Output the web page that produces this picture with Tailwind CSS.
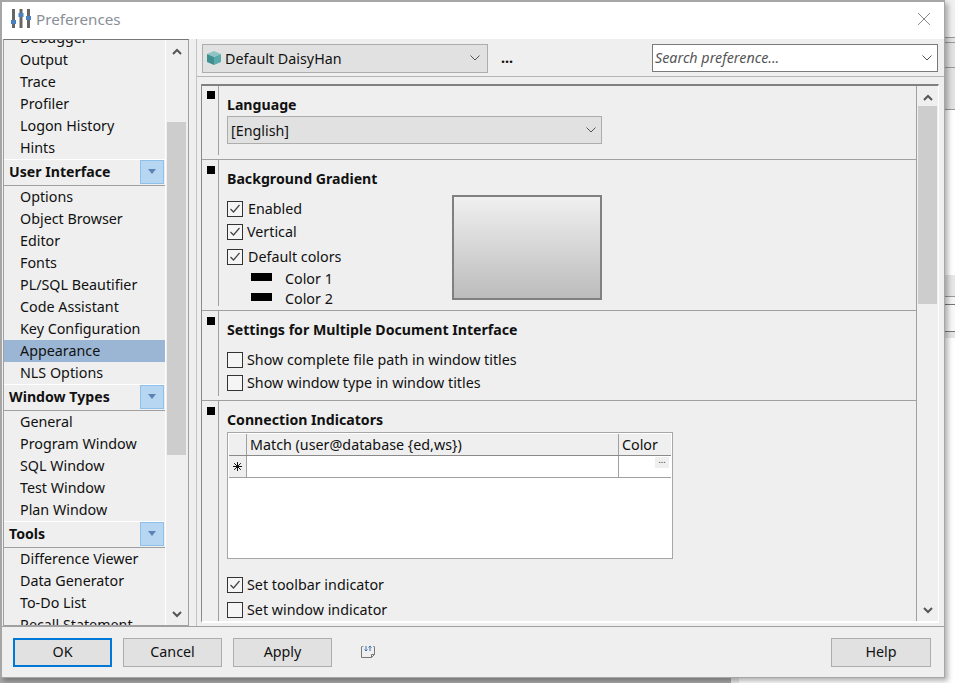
<!DOCTYPE html>
<html>
<head>
<meta charset="utf-8">
<script src="https://cdn.jsdelivr.net/npm/@tailwindcss/browser@4"></script>
</head>
<body class="w-[955px] h-[683px] overflow-hidden bg-white font-['Noto_Sans','Open_Sans',sans-serif] text-[14.3px] leading-[22px] text-[#111]">
<div class="relative w-[955px] h-[683px]">
  <!-- background app behind the dialog -->
  <div class="absolute left-[944px] top-[0px] w-[11px] h-[38px] bg-[#f0f0f0]"></div>
  <div class="absolute left-[944px] top-[38px] w-[11px] h-[72px] bg-[#e2e2e2]"></div>
  <div class="absolute left-[944px] top-[37px] w-[11px] h-[1px] bg-[#999]"></div>
  <div class="absolute left-[944px] top-[42px] w-[11px] h-[1px] bg-[#999]"></div>
  <div class="absolute left-[944px] top-[67px] w-[11px] h-[1px] bg-[#999]"></div>
  <div class="absolute left-[944px] top-[109px] w-[11px] h-[1px] bg-[#999]"></div>
  <div class="absolute left-[944px] top-[275px] w-[11px] h-[63px] bg-[#e6e6e6]"></div>
  <div class="absolute left-[944px] top-[296px] w-[11px] h-[1px] bg-[#999]"></div>
  <div class="absolute left-[944px] top-[297px] w-[11px] h-[7px] bg-[#f4f4f4]"></div>
  <div class="absolute left-[944px] top-[304px] w-[11px] h-[1px] bg-[#777]"></div>
  <div class="absolute left-[944px] top-[305px] w-[11px] h-[26px] bg-[#f8f8f8]"></div>
  <div class="absolute left-[944px] top-[331px] w-[11px] h-[1px] bg-[#777]"></div>
  <div class="absolute left-[0px] top-[678px] w-[731px] h-[5px] bg-[#a8a8a8]"></div>
  <div class="absolute left-[731px] top-[678px] w-[8px] h-[5px] bg-[#e8e8e8]"></div>

  <div class="relative flex flex-col w-[945px] h-[678px] border border-t-2 border-l-2 border-[#a6a6a6] bg-[#efefef] shadow-[3px_3px_5px_rgba(0,0,0,0.3)]">
    <!-- title bar -->
    <div class="flex items-center h-[37px] shrink-0 bg-white pl-[8px] pr-[13px] pb-[3px]">
      <svg width="22" height="22" viewBox="0 0 22 22" class="shrink-0">
        <g fill="#666"><rect x="2" y="1" width="3" height="19"/><rect x="9.500" y="1" width="3" height="19"/><rect x="17" y="1" width="3" height="19"/></g>
        <g fill="#4a7fc0"><rect x="1" y="12" width="5" height="4"/><rect x="8.500" y="5" width="5" height="4"/><rect x="16" y="8" width="5" height="4"/></g>
      </svg>
      <span class="ml-[4px] text-[15.200px] text-[#8a8f96]">Preferences</span>
      <svg width="14" height="14" viewBox="0 0 14 14" class="ml-auto" fill="none" stroke="#888" stroke-width="1"><path d="M1 1l12 12M13 1L1 13"/></svg>
    </div>

    <div class="flex flex-1 min-h-0">
      <!-- left tree -->
      <div class="relative w-[186px] shrink-0 ml-[1px] mr-[7px] border-x border-b border-t border-x-[#a0a0a0] border-b-[#a0a0a0] border-t-[#777] overflow-hidden">
        <div class="w-[162px] -mt-[13px] border-r border-white">
          <div class="h-[22px] pl-[16px]">Debugger</div>
          <div class="h-[22px] pl-[16px]">Output</div>
          <div class="h-[22px] pl-[16px]">Trace</div>
          <div class="h-[22px] pl-[16px]">Profiler</div>
          <div class="h-[22px] pl-[16px]">Logon History</div>
          <div class="h-[22px] pl-[16px]">Hints</div>
          <div class="flex items-center h-[27px] pl-[5px] pb-[2px] border-y border-t-white border-b-[#a0a0a0] font-bold text-[14.150px]">User Interface<span class="ml-auto mr-[1px] flex items-center justify-center w-[24px] h-[24px] bg-[#b6d6f2] border border-[#8fc0ea]"><span class="w-0 h-0 border-x-[4px] border-x-transparent border-t-[5px] border-t-[#5a84b5]"></span></span></div>
          <div class="h-[22px] pl-[16px]">Options</div>
          <div class="h-[22px] pl-[16px]">Object Browser</div>
          <div class="h-[22px] pl-[16px]">Editor</div>
          <div class="h-[22px] pl-[16px]">Fonts</div>
          <div class="h-[22px] pl-[16px]">PL/SQL Beautifier</div>
          <div class="h-[22px] pl-[16px]">Code Assistant</div>
          <div class="h-[22px] pl-[16px]">Key Configuration</div>
          <div class="h-[22px] pl-[16px] bg-[#9bb6d4]">Appearance</div>
          <div class="h-[22px] pl-[16px]">NLS Options</div>
          <div class="flex items-center h-[27px] pl-[5px] pb-[2px] border-y border-t-white border-b-[#a0a0a0] font-bold text-[14.150px]">Window Types<span class="ml-auto mr-[1px] flex items-center justify-center w-[24px] h-[24px] bg-[#b6d6f2] border border-[#8fc0ea]"><span class="w-0 h-0 border-x-[4px] border-x-transparent border-t-[5px] border-t-[#5a84b5]"></span></span></div>
          <div class="h-[22px] pl-[16px]">General</div>
          <div class="h-[22px] pl-[16px]">Program Window</div>
          <div class="h-[22px] pl-[16px]">SQL Window</div>
          <div class="h-[22px] pl-[16px]">Test Window</div>
          <div class="h-[22px] pl-[16px]">Plan Window</div>
          <div class="flex items-center h-[27px] pl-[5px] pb-[2px] border-y border-t-white border-b-[#a0a0a0] font-bold text-[14.150px]">Tools<span class="ml-auto mr-[1px] flex items-center justify-center w-[24px] h-[24px] bg-[#b6d6f2] border border-[#8fc0ea]"><span class="w-0 h-0 border-x-[4px] border-x-transparent border-t-[5px] border-t-[#5a84b5]"></span></span></div>
          <div class="h-[22px] pl-[16px]">Difference Viewer</div>
          <div class="h-[22px] pl-[16px]">Data Generator</div>
          <div class="h-[22px] pl-[16px]">To-Do List</div>
          <div class="h-[22px] pl-[16px]">Recall Statement</div>
        </div>
        <!-- scrollbar -->
        <div class="absolute right-[1px] top-0 bottom-0 w-[21px] flex flex-col items-center">
          <svg width="10" height="7" viewBox="0 0 10 7" class="mt-[8px]" fill="none" stroke="#555" stroke-width="2"><path d="M1 6l4-4 4 4"/></svg>
          <div class="w-[19px] h-[333px] mt-[67px] bg-[#cdcdcd]"></div>
          <svg width="10" height="7" viewBox="0 0 10 7" class="mt-auto mb-[7px]" fill="none" stroke="#555" stroke-width="2"><path d="M1 1l4 4 4-4"/></svg>
        </div>
      </div>

      <!-- right -->
      <div class="flex-1 min-w-0 flex flex-col border-l border-[#c4c4c4]">
        <div class="flex items-center h-[38px] shrink-0 pt-[1px] pl-[5px] pr-[6px] border-b border-[#b5b5b5]">
          <div class="flex items-center w-[286px] h-[29px] bg-[#e1e1e1] border border-[#adadad] pl-[3px] pr-[7px]">
            <svg width="16" height="16" viewBox="0 0 16 16" class="shrink-0"><path d="M1 4l7-3 7 3-7 3z" fill="#8fc4c4"/><path d="M1 4l7 3v8l-7-3z" fill="#3e8f92"/><path d="M15 4l-7 3v8l7-3z" fill="#5aa9ab"/></svg>
            <span class="ml-[3px] pt-[2px]">Default DaisyHan</span>
            <svg width="10" height="6" viewBox="0 0 10 6" class="ml-auto" fill="none" stroke="#555"><path d="M0.500 0.500L5 5l4.500-4.500"/></svg>
          </div>
          <span class="ml-[13px] font-bold leading-[14px]">...</span>
          <div class="ml-auto flex items-center w-[286px] h-[28px] bg-white border border-[#7a7a7a] pl-[2px] pr-[5px]">
            <span class="italic text-[#555]">Search preference...</span>
            <svg width="10" height="6" viewBox="0 0 10 6" class="ml-auto" fill="none" stroke="#555"><path d="M0.500 0.500L5 5l4.500-4.500"/></svg>
          </div>
        </div>

        <div class="relative flex-1 min-h-0 mt-[7px] mb-[3px] mr-[5px] ml-[4px] border-x border-t-2 border-t-[#808080] border-l-[#8a8a8a] border-r-white border-b-2 border-b-white overflow-hidden">
          <div class="w-[715px] h-full border-r border-[#a0a0a0]">
            <!-- language -->
            <section class="flex h-[74px] border-b border-[#a0a0a0]">
              <div class="w-[17px] shrink-0 h-[69px] mt-0 border-r border-[#a0a0a0] pl-[5px] pt-[5px]"><div class="w-[8px] h-[8px] bg-black"></div></div>
              <div class="pl-[8px] pt-[8px]">
                <div class="font-bold text-[14.150px]">Language</div>
                <div class="flex items-center w-[375px] h-[28px] mt-[0px] bg-[#e1e1e1] border border-[#adadad] px-[3px] pr-[5px]"><span class="pt-[1px]">[English]</span><svg width="10" height="6" viewBox="0 0 10 6" class="ml-auto" fill="none" stroke="#555"><path d="M0.500 0.500L5 5l4.500-4.500"/></svg></div>
              </div>
            </section>
            <!-- gradient -->
            <section class="flex h-[151px] border-b border-[#a0a0a0]">
              <div class="w-[17px] shrink-0 h-[146px] border-r border-[#a0a0a0] pl-[5px] pt-[6px]"><div class="w-[8px] h-[8px] bg-black"></div></div>
              <div class="pl-[8px] pt-[8px] flex-1 relative">
                <div class="font-bold text-[14.150px]">Background Gradient</div>
                <div class="flex items-center gap-[5px] mt-[8px] h-[22px]"><span class="flex items-center justify-center w-[16px] h-[16px] border border-[#333] bg-[#f5f5f5]"><svg width="12" height="10" viewBox="0 0 12 10" fill="none" stroke="#444" stroke-width="1.200"><path d="M1.500 5l3 3 6-7"/></svg></span>Enabled</div>
                <div class="flex items-center gap-[4px] mt-[1px] h-[22px]"><span class="flex items-center justify-center w-[16px] h-[16px] border border-[#333] bg-[#f5f5f5]"><svg width="12" height="10" viewBox="0 0 12 10" fill="none" stroke="#444" stroke-width="1.200"><path d="M1.500 5l3 3 6-7"/></svg></span>Vertical</div>
                <div class="flex items-center gap-[5px] mt-[3px] h-[22px]"><span class="flex items-center justify-center w-[16px] h-[16px] border border-[#333] bg-[#f5f5f5]"><svg width="12" height="10" viewBox="0 0 12 10" fill="none" stroke="#444" stroke-width="1.200"><path d="M1.500 5l3 3 6-7"/></svg></span>Default colors</div>
                <div class="flex items-center h-[20px] mt-[1px] pl-[24px]"><span class="w-[21px] h-[8px] bg-black mr-[13px] -mt-[5px]"></span>Color 1</div>
                <div class="flex items-center h-[20px] pl-[24px]"><span class="w-[21px] h-[8px] bg-black mr-[13px] -mt-[5px]"></span>Color 2</div>
                <div class="absolute left-[233px] top-[35px] w-[150px] h-[105px] border-2 border-[#808080] bg-gradient-to-b from-[#f0f0f0] to-[#bcbcbc]"></div>
              </div>
            </section>
            <!-- mdi -->
            <section class="flex h-[90px] border-b border-[#a0a0a0]">
              <div class="w-[17px] shrink-0 h-[85px] border-r border-[#a0a0a0] pl-[5px] pt-[6px]"><div class="w-[8px] h-[8px] bg-black"></div></div>
              <div class="pl-[8px] pt-[8px]">
                <div class="font-bold text-[14.150px]">Settings for Multiple Document Interface</div>
                <div class="flex items-center gap-[4px] mt-[8px] h-[22px]"><span class="w-[16px] h-[16px] border border-[#333] bg-[#f5f5f5]"></span>Show complete file path in window titles</div>
                <div class="flex items-center gap-[4px] mt-[1px] h-[22px]"><span class="w-[16px] h-[16px] border border-[#333] bg-[#f5f5f5]"></span>Show window type in window titles</div>
              </div>
            </section>
            <!-- connection -->
            <section class="flex h-[225px]">
              <div class="w-[17px] shrink-0 h-full border-r border-[#a0a0a0] pl-[5px] pt-[6px]"><div class="w-[8px] h-[8px] bg-black"></div></div>
              <div class="pl-[8px] pt-[8px]">
                <div class="font-bold text-[14.150px]">Connection Indicators</div>
                <div class="w-[446px] h-[127px] mt-[1px] border border-[#a6a6a6] bg-white p-[1px]">
                  <div class="flex h-[22px] bg-[#efefef] border-b border-[#8a8a8a]">
                    <div class="w-[18px] border-r border-[#a0a0a0]"></div>
                    <div class="w-[372px] pl-[3px] border-r border-[#a0a0a0]">Match (user@database {ed,ws})</div>
                    <div class="flex-1 pl-[3px]">Color</div>
                  </div>
                  <div class="flex h-[22px] border-b border-[#a0a0a0]">
                    <div class="flex items-center justify-center w-[18px] bg-[#efefef] border-r border-[#a0a0a0]"><svg width="9" height="9" viewBox="0 0 9 9" fill="none" stroke="#111"><path d="M4.500 0v9M0 4.500h9M1.200 1.200l6.600 6.600M7.800 1.200L1.200 7.800"/></svg></div>
                    <div class="w-[372px] border-r border-[#a0a0a0]"></div>
                    <div class="flex-1 flex justify-end items-start pr-[2px] pt-[1px]"><span class="flex items-start justify-center w-[14px] h-[11px] bg-[#efefef] text-[9px] leading-[6px] text-[#333]">...</span></div>
                  </div>
                </div>
                <div class="flex items-center gap-[4px] mt-[15px] h-[22px]"><span class="flex items-center justify-center w-[16px] h-[16px] border border-[#333] bg-[#f5f5f5]"><svg width="12" height="10" viewBox="0 0 12 10" fill="none" stroke="#444" stroke-width="1.200"><path d="M1.500 5l3 3 6-7"/></svg></span>Set toolbar indicator</div>
                <div class="flex items-center gap-[4px] mt-[3px] h-[22px]"><span class="w-[16px] h-[16px] border border-[#333] bg-[#f5f5f5]"></span>Set window indicator</div>
              </div>
            </section>
          </div>
          <!-- right scrollbar -->
          <div class="absolute right-0 top-0 bottom-0 w-[21px] flex flex-col items-center">
            <svg width="10" height="7" viewBox="0 0 10 7" class="mt-[8px]" fill="none" stroke="#555" stroke-width="2"><path d="M1 6l4-4 4 4"/></svg>
            <div class="w-[19px] h-[198px] mt-[5px] bg-[#cdcdcd]"></div>
            <svg width="10" height="7" viewBox="0 0 10 7" class="mt-auto mb-[7px]" fill="none" stroke="#555" stroke-width="2"><path d="M1 1l4 4 4-4"/></svg>
          </div>
        </div>
      </div>
    </div>

    <!-- footer -->
    <div class="flex items-center h-[51px] shrink-0 border-t border-[#a0a0a0] pl-[11px] pr-[13px]">
      <button class="w-[99px] h-[29px] bg-[#e1e1e1] border-2 border-[#0078d7]">OK</button>
      <button class="ml-[11px] w-[99px] h-[29px] bg-[#e1e1e1] border border-[#adadad]">Cancel</button>
      <button class="ml-[11px] w-[99px] h-[29px] bg-[#e1e1e1] border border-[#adadad]">Apply</button>
      <svg width="16" height="14" viewBox="0 0 16 14" class="ml-[28px]" fill="none"><path d="M1.500 1.500v11h10l3-3v-8M11.500 12.500v-3h3" stroke="#777"/><path d="M1.500 1.500h2M13 1.500h1.500" stroke="#999"/><path d="M6 1v5M4.500 4.500L6 6l1.500-1.500M10 6V1M8.500 2.500L10 1l1.500 1.500" stroke="#3b73b5"/></svg>
      <button class="ml-auto w-[100px] h-[29px] bg-[#e1e1e1] border border-[#adadad]">Help</button>
    </div>
  </div>
</div>
</body>
</html>
